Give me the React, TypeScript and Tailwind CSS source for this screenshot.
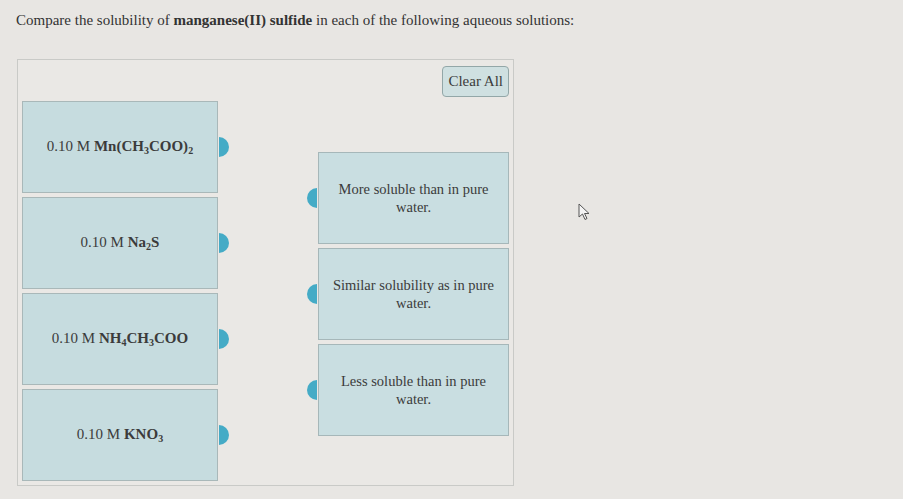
const serif = { fontFamily: '"Liberation Serif", "Times New Roman", serif' };

type Chem = { label: React.ReactNode };

const solutions: Chem[] = [
  {
    label: (
      <>
        0.10 M{" "}
        <b>
          Mn(CH<sub className="text-[10px]">3</sub>COO)<sub className="text-[10px]">2</sub>
        </b>
      </>
    ),
  },
  {
    label: (
      <>
        0.10 M{" "}
        <b>
          Na<sub className="text-[10px]">2</sub>S
        </b>
      </>
    ),
  },
  {
    label: (
      <>
        0.10 M{" "}
        <b>
          NH<sub className="text-[10px]">4</sub>CH<sub className="text-[10px]">3</sub>COO
        </b>
      </>
    ),
  },
  {
    label: (
      <>
        0.10 M{" "}
        <b>
          KNO<sub className="text-[10px]">3</sub>
        </b>
      </>
    ),
  },
];

const answers = [
  "More soluble than in pure water.",
  "Similar solubility as in pure water.",
  "Less soluble than in pure water.",
];

function LeftCard({ children }: { children: React.ReactNode }) {
  return (
    <div className="relative h-[92px] w-[196px]">
      <div className="flex h-full w-full items-center justify-center border border-[#a9b8b9] bg-[#c6dcdf] text-[15px] text-[#3b3b3b]">
        <span>{children}</span>
      </div>
      {/* connector knob */}
      <div className="absolute right-[-11px] top-1/2 h-[20px] w-[10px] -translate-y-1/2 rounded-r-full bg-[#45abc6]" />
    </div>
  );
}

function RightCard({ text }: { text: string }) {
  return (
    <div className="relative h-[92px] w-[191px]">
      <div className="absolute left-[-11px] top-1/2 h-[20px] w-[10px] -translate-y-1/2 rounded-l-full bg-[#45abc6]" />
      <div className="flex h-full w-full items-center justify-center border border-[#a6b7b9] bg-[#c9dee1] px-[10px] text-center text-[14.5px] leading-[18px] text-[#3b3b3b]">
        {text}
      </div>
    </div>
  );
}

export default function App() {
  return (
    <div className="relative h-[499px] w-[903px] overflow-hidden bg-[#e8e6e3]" style={serif}>
      <p className="pl-[16px] pt-[9px] text-[15px] text-[#333]">
        Compare the solubility of <b>manganese(II) sulfide</b> in each of the following aqueous solutions:
      </p>

      <div className="ml-[17px] mt-[27px] h-[427px] w-[497px] border border-[#c9cac7] bg-[#eae8e5] px-[4px] pt-[6px]">
        <div className="flex justify-end">
          <button className="h-[31px] rounded-[4px] border border-[#93a7a8] bg-[#cfe0e1] px-[5px] text-[15px] text-[#3b3b3b]">
            Clear All
          </button>
        </div>

        <div className="mt-[4px] flex justify-between">
          <div className="flex flex-col gap-[4px]">
            {solutions.map((s, i) => (
              <LeftCard key={i}>{s.label}</LeftCard>
            ))}
          </div>
          <div className="mt-[51px] flex flex-col gap-[4px]">
            {answers.map((a) => (
              <RightCard key={a} text={a} />
            ))}
          </div>
        </div>
      </div>

      {/* mouse cursor */}
      <svg className="absolute left-[578px] top-[203px]" width="14" height="18" viewBox="0 0 14 18">
        <path d="M1 1 L1 14 L4.5 11 L7 16.5 L9 15.5 L6.5 10.5 L11 10.5 Z" fill="#f4f4f4" stroke="#555" strokeWidth="1" strokeLinejoin="round" />
      </svg>
    </div>
  );
}
